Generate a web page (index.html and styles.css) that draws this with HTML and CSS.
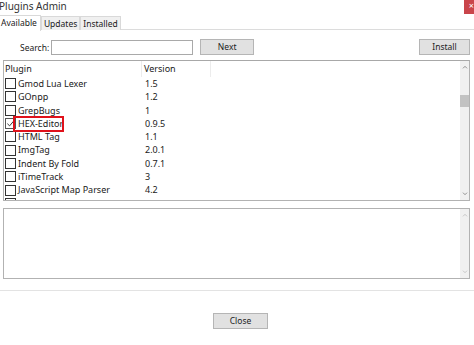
FILE: index.html
```html
<!DOCTYPE html>
<html>
<head>
<meta charset="utf-8">
<link rel="stylesheet" href="styles.css">
</head>
<body>
<div class="dialog">
  <div class="titlebar">
    <span class="title">Plugins Admin</span>
    <span class="closex">×</span>
  </div>
  <div class="tabs">
    <div class="tab active">Available</div>
    <div class="tab">Updates</div>
    <div class="tab">Installed</div>
  </div>
  <div class="panel">
    <div class="searchrow">
      <label class="searchlabel">Search:</label>
      <div class="input"></div>
      <div class="btn next">Next</div>
      <div class="spacer"></div>
      <div class="btn install">Install</div>
    </div>
    <div class="list">
      <div class="listbody">
        <div class="header">
          <div class="col1 hcell">Plugin</div>
          <div class="col2 hcell">Version</div>
          <div class="col3"></div>
        </div>
        <div class="row"><span class="cb"></span><span class="col1t">Gmod Lua Lexer</span><span class="col2">1.5</span></div>
        <div class="row"><span class="cb"></span><span class="col1t">GOnpp</span><span class="col2">1.2</span></div>
        <div class="row"><span class="cb"></span><span class="col1t">GrepBugs</span><span class="col2">1</span></div>
        <div class="row"><span class="cb checked"><svg viewBox="0 0 10 10" width="9" height="9"><path d="M1.5 5.2 L4 7.6 L8.6 2.2" fill="none" stroke="#222" stroke-width="1"/></svg></span><span class="col1t hex">HEX-Editor</span><span class="col2">0.9.5</span></div>
        <div class="row"><span class="cb"></span><span class="col1t">HTML Tag</span><span class="col2">1.1</span></div>
        <div class="row"><span class="cb"></span><span class="col1t">ImgTag</span><span class="col2">2.0.1</span></div>
        <div class="row"><span class="cb"></span><span class="col1t">Indent By Fold</span><span class="col2">0.7.1</span></div>
        <div class="row"><span class="cb"></span><span class="col1t">iTimeTrack</span><span class="col2">3</span></div>
        <div class="row"><span class="cb"></span><span class="col1t">JavaScript Map Parser</span><span class="col2">4.2</span></div>
        <div class="row partial"><span class="cb"></span><span class="col1t">JN Notepad++ Plugin</span><span class="col2">2.2.185.5</span></div>
      </div>
      <div class="scrollbar">
        <span class="arrow up"><svg viewBox="0 0 8 6" width="6" height="4"><path d="M1 5 L4 2 L7 5" fill="none" stroke="#777" stroke-width="1.2"/></svg></span>
        <div class="track"><div class="thumb"></div></div>
        <span class="arrow down"><svg viewBox="0 0 8 6" width="6" height="4"><path d="M1 1 L4 4 L7 1" fill="none" stroke="#777" stroke-width="1.2"/></svg></span>
      </div>
    </div>
    <div class="desc">
      <div class="descbody"></div>
      <div class="scrollbar small">
        <span class="arrow up"><svg viewBox="0 0 8 6" width="6" height="4"><path d="M1 5 L4 2 L7 5" fill="none" stroke="#bbb" stroke-width="1.2"/></svg></span>
        <div class="track"></div>
        <span class="arrow down"><svg viewBox="0 0 8 6" width="6" height="4"><path d="M1 1 L4 4 L7 1" fill="none" stroke="#bbb" stroke-width="1.2"/></svg></span>
      </div>
    </div>
  </div>
  <div class="sep"></div>
  <div class="footer">
    <div class="btn close">Close</div>
  </div>
  <div class="highlight"></div>
</div>
</body>
</html>
```
FILE: styles.css
```css
html, body {
  margin: 0;
  padding: 0;
  background: #ffffff;
}
.dialog {
  position: relative;
  width: 474px;
  height: 345px;
  overflow: hidden;
  font-family: "Noto Sans", "Open Sans", sans-serif;
  font-size: 9px;
  color: #1a1a1a;
  background: #ffffff;
}
.titlebar {
  height: 14px;
  display: flex;
  justify-content: space-between;
  align-items: flex-start;
}
.title {
  font-size: 10px;
  line-height: 12px;
  margin-left: -1px;
  color: #333;
}
.closex {
  width: 10px;
  height: 14px;
  background: #c9454b;
  color: #fff;
  font-size: 9px;
  line-height: 12px;
  text-align: right;
}
.tabs {
  display: flex;
  height: 14px;
  margin-top: 1px;
  border-bottom: 1px solid #dcdcdc;
}
.tab {
  height: 13px;
  line-height: 13px;
  padding: 0 2px;
  border: 1px solid #d9d9d9;
  border-bottom: none;
  background: #f0f0f0;
  margin-top: 1px;
  font-size: 8.5px;
}
.tab.active {
  background: #ffffff;
  margin-top: 0;
  height: 15px;
  margin-bottom: -1px;
  border-color: #d9d9d9;
  padding: 0 3px 0 1px;
  border-left: none;
}
.panel {
  display: flex;
  flex-direction: column;
}
.searchrow {
  display: flex;
  align-items: center;
  height: 16px;
  margin-top: 9px;
  padding: 0 4px 0 20px;
}
.searchlabel {
  font-size: 8.5px;
  margin-right: 2px;
  white-space: nowrap;
}
.input {
  width: 140px;
  height: 13px;
  border: 1px solid #a9a9a9;
  background: #fff;
}
.btn {
  height: 14px;
  line-height: 14px;
  border: 1px solid #b5b5b5;
  background: #e1e1e1;
  text-align: center;
  font-size: 8.5px;
  color: #222;
}
.next {
  width: 52px;
  margin-left: 7px;
}
.spacer { flex: 1; }
.install {
  width: 49px;
}
.list {
  display: flex;
  margin: 5px 4px 0 3px;
  height: 139px;
  border: 1px solid #b2b2b2;
  border-top-color: #a8a8a8;
  overflow: hidden;
}
.listbody {
  flex: 1;
  overflow: hidden;
}
.header {
  display: flex;
  height: 16px;
  line-height: 16px;
}
.hcell {
  border-right: 1px solid #ececec;
}
.col1 {
  width: 136px;
  padding-left: 1px;
}
.header .col2 {
  width: 66px;
  padding-left: 2px;
}
.row {
  display: flex;
  align-items: center;
  height: 13.3px;
  line-height: 13.3px;
  padding-left: 1px;
}
.cb {
  width: 9px;
  height: 9px;
  border: 1px solid #333;
  background: #fff;
  display: flex;
  align-items: center;
  justify-content: center;
  flex: none;
}
.cb.checked {
  border-color: #555;
}
.col1t {
  width: 125px;
  padding-left: 2px;
  white-space: nowrap;
}
.row .col2 {
  padding-left: 2px;
}
.scrollbar {
  width: 9px;
  background: #f0f0f0;
  display: flex;
  flex-direction: column;
  align-items: center;
}
.arrow {
  height: 12px;
  display: flex;
  align-items: center;
  justify-content: center;
}
.track {
  flex: 1;
  width: 100%;
  position: relative;
}
.thumb {
  margin-top: 22px;
  height: 12px;
  width: 100%;
  background: #c2c2c2;
}
.desc {
  display: flex;
  margin: 7px 4px 0 3px;
  height: 69px;
  border: 1px solid #b2b2b2;
}
.descbody { flex: 1; }
.sep {
  margin-top: 11px;
  height: 1px;
  background: #e3e3e3;
}
.footer {
  display: flex;
  justify-content: center;
  padding-top: 22px;
}
.close {
  width: 53px;
  margin-left: 7px;
}
.highlight {
  position: absolute;
  left: 13px;
  top: 116px;
  width: 47px;
  height: 12px;
  border: 2px solid #e0121b;
}
```
